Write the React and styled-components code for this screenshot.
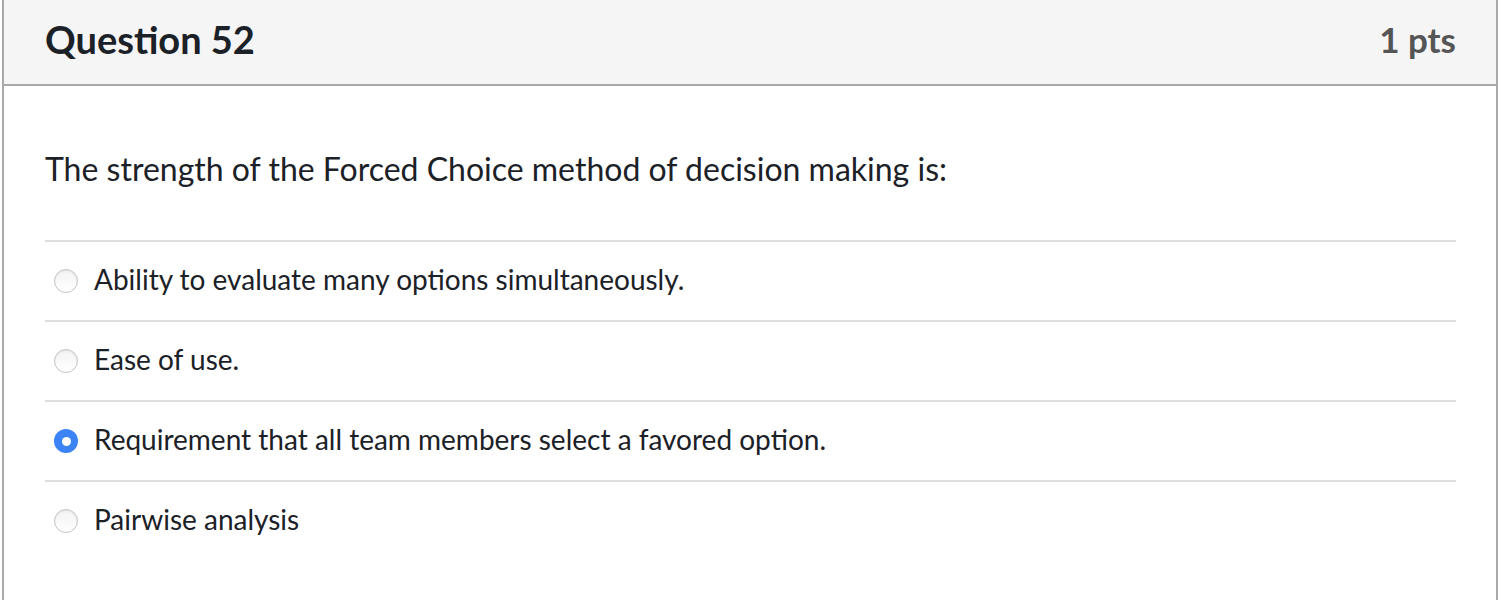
import React from "react";
import styled, { createGlobalStyle } from "styled-components";

const Global = createGlobalStyle`
  html, body {
    margin: 0;
    padding: 0;
    background: #fff;
  }
  body {
    font-family: Lato, "Liberation Sans", sans-serif;
    color: #1b2127;
  }
`;

const Card = styled.div`
  margin-left: 2px;
  width: 1496px;
  height: 600px;
  box-sizing: border-box;
  border-left: 2px solid #a9a9a9;
  border-right: 2px solid #a9a9a9;
  overflow: hidden;
`;

const Header = styled.div`
  display: flex;
  align-items: center;
  justify-content: space-between;
  height: 78px;
  padding: 0 40px 6px 41px;
  background: #f5f5f5;
  border-bottom: 2px solid #a9a9a9;
`;

const Title = styled.h2`
  margin: 0;
  font-size: 38px;
  font-weight: 700;
  color: #1b2127;
`;

const Points = styled.div`
  font-size: 35px;
  font-weight: 700;
  color: #555;
`;

const Body = styled.div`
  padding: 0 40px 0 41px;
`;

const QuestionText = styled.p`
  margin: 0;
  padding-top: 64px;
  height: 90px;
  font-size: 32px;
  line-height: 38px;
`;

const Answers = styled.div`
  display: flex;
  flex-direction: column;
`;

const Row = styled.label`
  display: flex;
  align-items: center;
  gap: 16px;
  box-sizing: border-box;
  height: 80px;
  padding: 0 0 4px 9px;
  border-top: 2px solid #dedede;
  font-size: 28px;
`;

const Radio = styled.span`
  flex: none;
  box-sizing: border-box;
  width: 24px;
  height: 24px;
  margin-top: 4px;
  border-radius: 50%;
  display: flex;
  align-items: center;
  justify-content: center;
  ${(p) =>
    p.$checked
      ? `
    background: #3c84f6;
    border: none;
  `
      : `
    background: linear-gradient(#f3f3f3, #ffffff);
    border: 1px solid #c4c4c4;
    box-shadow: inset 0 1px 2px rgba(0,0,0,0.08);
  `}

  &::after {
    content: "";
    display: ${(p) => (p.$checked ? "block" : "none")};
    width: 9px;
    height: 9px;
    border-radius: 50%;
    background: #fff;
  }
`;

const answers = [
  { text: "Ability to evaluate many options simultaneously.", checked: false },
  { text: "Ease of use.", checked: false },
  { text: "Requirement that all team members select a favored option.", checked: true },
  { text: "Pairwise analysis", checked: false },
];

export default function App() {
  return (
    <>
      <Global />
      <Card>
        <Header>
          <Title>Question 52</Title>
          <Points>1 pts</Points>
        </Header>
        <Body>
          <QuestionText>
            The strength of the Forced Choice method of decision making is:
          </QuestionText>
          <Answers>
            {answers.map((a) => (
              <Row key={a.text}>
                <Radio $checked={a.checked} />
                <span>{a.text}</span>
              </Row>
            ))}
          </Answers>
        </Body>
      </Card>
    </>
  );
}
